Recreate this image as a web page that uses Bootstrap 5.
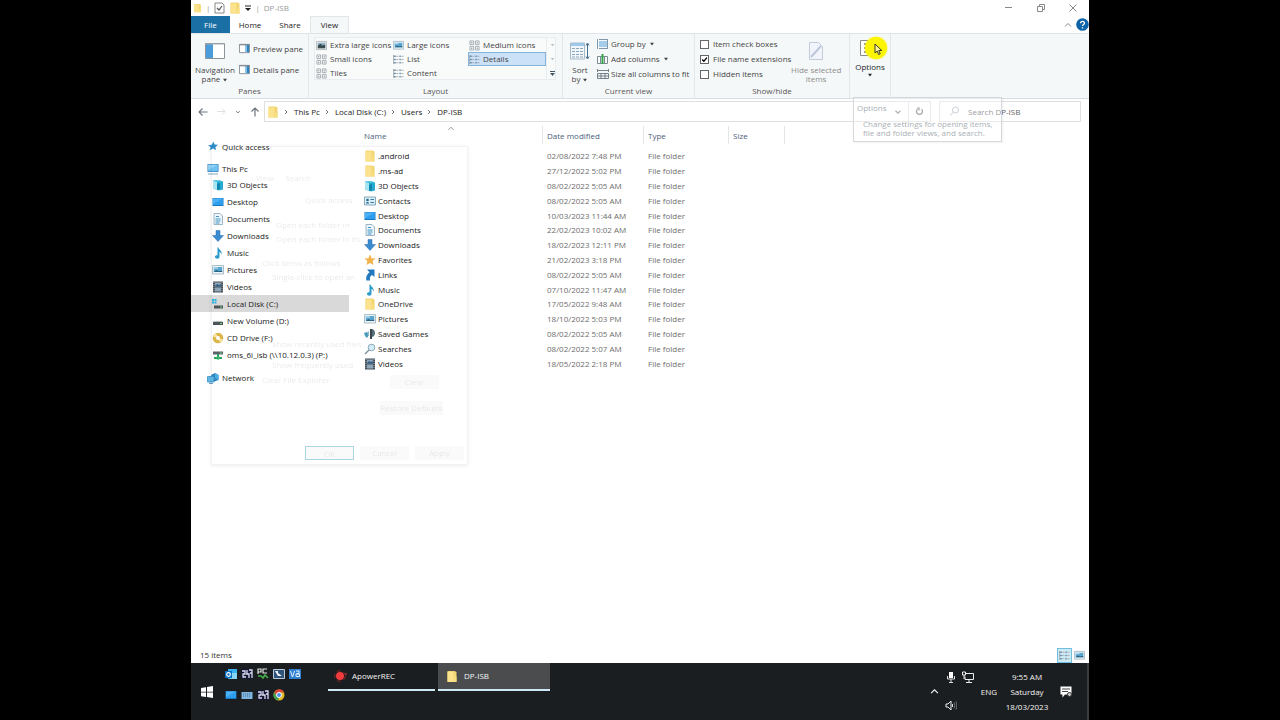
<!DOCTYPE html>
<html lang="en">
<head>
<meta charset="utf-8">
<meta name="viewport" content="width=device-width, initial-scale=1">
<title>DP-ISB</title>
<link rel="stylesheet" href="https://cdn.jsdelivr.net/npm/bootstrap@5.3.0/dist/css/bootstrap.min.css">
<script src="https://cdn.jsdelivr.net/npm/bootstrap@5.3.0/dist/js/bootstrap.bundle.min.js"></script>
<style>
  body { background:#000; color:#222; font:8px/10px "Open Sans","Noto Sans",sans-serif; padding:0 191px; }
  a { color:inherit; text-decoration:none; }
  button { border:0; background:none; padding:0; color:inherit; font:inherit; white-space:nowrap; }
  svg { display:block; flex:none; }
  .screen { min-height:100vh; }
  .win { background:#fff; }
  .titlebar { height:16px; padding-left:2px; color:#999; }
  .titlebar .cap { width:32px; height:14px; }
  .tabs { height:17px; }
  .tabs a { text-align:center; padding:0 8px; border:1px solid transparent; border-bottom:0; line-height:15px; }
  .tabs a.file { background:#1a6fa5; color:#fff; padding:0 12px; }
  .tabs a.on { background:#f5f8f9; border-color:#e3e6e8; padding:0 10px; }
  .ribbon { background:#f5f8f9; border-top:1px solid #e0e4e8; border-bottom:1px solid #d9dddf; height:66px; color:#444; }
  .grp { border-right:1px solid #e3e7e9; padding-top:1px; }
  .grp-body { height:51px; }
  .grp-name { text-align:center; color:#555; }
  .bigbtn { text-align:center; line-height:9px; padding-top:4px; }
  .bigbtn svg { margin:0 auto 5px; }
  .bigbtn.faded { color:#8c8c8c; }
  .gallery-pad { padding:2px 6px 0 5px; }
  .gallery { height:43px; border:1px solid #e6ecef; background:#f9fbfb; }
  .gallery .views { display:grid; grid-template-columns:77px 76px 78px; grid-template-rows:repeat(3,14px); }
  .gallery button { display:flex; align-items:center; gap:3px; border:1px solid transparent; }
  .gallery button.on { background:#cbe1f8; border-color:#86b3dc; }
  .gallery .scroller { width:11px; border-left:1px solid #e6ecef; }
  .gallery .scroller button { height:14px; justify-content:center; width:10px; }
  .form-check-input.tick { width:9px; height:9px; margin:0; border:1px solid #666; border-radius:0; background-color:#fff; flex:none; }
  .form-check-input.tick:checked { background-color:#fff; background-image:url("data:image/svg+xml,%3csvg xmlns='http://www.w3.org/2000/svg' viewBox='0 0 9 9'%3e%3cpath d='M1.5 4.5l2.2 2.2L7.6 2' fill='none' stroke='%23000' stroke-width='1.6'/%3e%3c/svg%3e"); background-size:contain; }
  .addr { padding:2px 8px 0 7px; height:25px; color:#222; }
  .addr .navi { width:66px; height:21px; padding-right:4px; }
  .boxed { border:1px solid #dfdfdf; height:21px; background:#fff; }
  .boxed .crumb { margin:0 5px 0 4px; color:#666; }
  .boxed input { border:0; outline:0; padding:0; font:inherit; color:#666; min-width:0; background:none; }
  .boxed input::placeholder { color:#666; opacity:1; }
  .search { width:142px; margin-left:8px; }
  .side { width:165px; padding-top:12px; }
  .side a { display:flex; align-items:center; gap:3px; height:17px; padding-left:16px; }
  .side ul { height:186px; }
  .side li { flex:1 1 0; min-height:0; }
  .side ul a { padding-left:21px; height:100%; width:158px; }
  .side a.on { background:#d9d9d9; }
  .files { table-layout:fixed; width:429px; border-collapse:separate; border-spacing:0; }
  .files th { font-weight:400; color:#4c607a; height:18px; border-right:1px solid #e5e5e5; padding:0 0 0 4px; }
  .files td { padding:0 0 0 4px; color:#6d6d6d; white-space:nowrap; line-height:10px; }
  .files tbody { height:227px; }
  .files th:first-child { padding-left:8px; }
  .files td:first-child a { display:flex; align-items:center; gap:2px; color:#222; padding-left:4px; }
  .files thead th { padding-top:2px; }
  .files .gap td { height:5px; line-height:5px; font-size:0; }
  .status { height:16px; padding:0 2px 0 9px; color:#333; }
  .status .v { width:15px; height:15px; display:flex; align-items:center; justify-content:center; }
  .status .v.on { background:#cdeaf5; border:1px solid #6fc0df; }
  .tip { position:absolute; top:97px; left:662px; width:149px; height:45px; border:1px solid #d6d9db; background:rgba(255,255,255,.35); color:#a9afb5; padding:5px 3px; line-height:9px; box-shadow:1px 1px 2px rgba(0,0,0,.06); }
  .tip p { margin:7px 0 0 6px; white-space:nowrap; }
  .spot { position:absolute; left:674px; top:37px; width:22px; height:22px; border-radius:50%; background:#fbf503; box-shadow:0 0 2px #fbf503; }
  .ghost { position:absolute; left:20px; top:146px; width:257px; height:319px; border:1px solid rgba(0,0,0,.05); box-shadow:0 1px 4px rgba(0,0,0,.07); color:rgba(0,0,0,.09); pointer-events:none; filter:blur(.5px); white-space:nowrap; }
  .ghost .fade-btn { background:rgba(0,0,0,.02); text-align:center; width:49px; height:14px; line-height:13px; }
  .ghost .ok { border:1px solid #a9d5e4; }
  .task { background:#1b1e20; color:#f4f4f4; height:57px; border-right:2px solid #3a3c3e; }
  .task .start { width:32px; }
  .task .quick { display:grid; grid-template-columns:repeat(5,12px); gap:9px 4px; width:104px; padding:5px 0 0 2px; align-content:start; }
  .task .app { height:28px; border-bottom:2px solid #cfe8f6; width:107px; display:flex; align-items:center; gap:5px; padding-left:6px; }
  .task .app.on { background:#4a4c4e; width:112px; margin-left:3px; gap:6px; padding-left:8px; }
  .tray { display:grid; grid-template-columns:17px 18px; grid-template-rows:28px 28px; align-items:center; justify-items:center; }
  .clock { width:52px; text-align:center; line-height:15px; padding-top:6px; }
</style>
</head>
<body>
<svg width="0" height="0" class="position-absolute" aria-hidden="true">
  <defs>
  <symbol id="folder" viewBox="0 0 12 12"><path d="M1.5 0.5h7l2 1v10h-9z" fill="#f3d472"/><path d="M1.5 1.5h6v10h-6z" fill="#fbe28c"/><path d="M8.500 6h2v5.500h-3z" fill="#f7de80"/></symbol>
  <symbol id="cube" viewBox="0 0 12 12"><path d="M1 1.500h7l3 1v8l-4 1-6-2z" fill="#28a9d0"/><path d="M1 1.500L5 3v8L1 9.500z" fill="#a6e6f2"/><path d="M1 1.500h7l3 1-6 .5z" fill="#49c4dd"/><path d="M5 5l3-1v6l-3 1z" fill="#0f87ae"/></symbol>
  <symbol id="desk" viewBox="0 0 12 12"><path d="M.5 2h11v8H.5z" fill="#1577c2"/><path d="M1 2.500h10v6.500H1z" fill="#2e9ded"/><path d="M1 2.500h10L1 8z" fill="#4bb1f5"/></symbol>
  <symbol id="pc" viewBox="0 0 12 12"><path d="M.5 1h11v8H.5z" fill="#3687bd"/><path d="M1.200 1.700h9.600v6.600H1.200z" fill="#6ec1f1"/><path d="M1.200 1.700h9.600L1.200 7z" fill="#93d4f7"/><path d="M1 11h10" stroke="#7ea6c4"/></symbol>
  <symbol id="doc" viewBox="0 0 12 12"><path d="M2 .5h6l2.500 2.500v8.500H2z" fill="#eef6fb" stroke="#84a3b8" stroke-width=".8"/><path d="M4 3.500h3M3.500 6h5M3.500 8h5M3.500 10h4" stroke="#3d92c6"/></symbol>
  <symbol id="down" viewBox="0 0 12 12"><path d="M4 .5h4v5h3.500L6 11.500.5 5.500H4z" fill="#3a8bd0" stroke="#2a6fae" stroke-width=".5"/></symbol>
  <symbol id="music" viewBox="0 0 12 12"><path d="M6.500.5c.3 2.500 4 3 3 7-.6-2-1.500-2.500-2-2.500v4.500c0 3-4 2.500-4.500.7C2.800 8.700 4.300 8 5.500 8.400V.5z" fill="#2b9acb"/></symbol>
  <symbol id="pic" viewBox="0 0 12 12"><path d="M.5 1.500h11v8.500H.5z" fill="#eef5f8" stroke="#8aa5b3" stroke-width=".7"/><path d="M1.800 3h8.400v5H1.800z" fill="#58a5d0"/><path d="M1.800 8c2-2 3-2 4-1.300S8.500 6 10.200 7v1z" fill="#2b6480"/><path d="M2 4h4" stroke="#d9eef8"/></symbol>
  <symbol id="video" viewBox="0 0 12 12"><path d="M1 .5h10v11H1z" fill="#454f59"/><path d="M3 1.500h6v4H3zM3 6.500h6v4H3z" fill="#8fa6b8"/><path d="M3 5l2-2 2 1 2-1v2.500H3z" fill="#345f86"/><path d="M2 1v10M10 1v10" stroke="#bcc4ca" stroke-dasharray="1 1" stroke-width=".8"/></symbol>
  <symbol id="star" viewBox="0 0 12 12"><path d="M6 .5l1.600 3.700 4 .3-3 2.600.9 4L6 9l-3.500 2.100.9-4-3-2.600 4-.3z"/></symbol>
  <symbol id="pin" viewBox="0 0 12 12"><path d="M6.500.5l1.200 3.200 3.700.3-2.800 2.500.7 3.500L6 8.200 2.200 10l1.200-3.300L.8 4.600l3.800-.5z" fill="#2f8fcb"/></symbol>
  <symbol id="disk" viewBox="0 0 12 12"><path d="M1 7l1-1h8l1 1z" fill="#b9bdbf"/><path d="M1 7h10v3H1z" fill="#4c5459"/><path d="M8 8.500h2" stroke="#6fe07a"/></symbol>
  <symbol id="windisk" viewBox="0 0 12 12"><path d="M0 1h2v2H0zM2.500 1h2v2h-2zM0 3.500h2v2H0zM2.500 3.500h2v2h-2z" fill="#24b2df"/><path d="M2 7.500h9v3H2z" fill="#4c5459"/><path d="M8 9h2" stroke="#6fe07a"/></symbol>
  <symbol id="cd" viewBox="0 0 12 12"><circle cx="6" cy="6" r="5.300" fill="#d9b54a"/><path d="M6 6L1 4.500a5 5 0 0 1 3-3.200zM6 6l5 1.500a5 5 0 0 1-3 3z" fill="#f6e7a5"/><circle cx="6" cy="6" r="1.900" fill="#fff"/></symbol>
  <symbol id="netdisk" viewBox="0 0 12 12"><path d="M1 2.500h10v3H1z" fill="#596267"/><path d="M8 4h2" stroke="#6fe07a"/><path d="M6 5v4M2 9h8" stroke="#28a35a" stroke-width="2"/><circle cx="6" cy="9" r="1.800" fill="#32b36a"/></symbol>
  <symbol id="net" viewBox="0 0 12 12"><path d="M4 3l4-2 3.500 2v5L6 10z" fill="#2b86c2"/><path d="M8 1l3.500 2v5L8 6z" fill="#4faee0"/><path d="M.5 4.500h6.500V10H.5z" fill="#62b9e8" stroke="#2b86c2" stroke-width=".7"/><path d="M2 11.300h4" stroke="#4a8ab0"/></symbol>
  <symbol id="contact" viewBox="0 0 12 12"><path d="M.5 2h11v8H.5z" fill="#dceef7" stroke="#6d95ad" stroke-width=".8"/><path d="M2 8.500c0-2 3-2 3 0z" fill="#276a92"/><circle cx="3.500" cy="5" r="1.300" fill="#276a92"/><path d="M6.500 4.500h3.500M6.500 7.500h3.500" stroke="#377ea8"/></symbol>
  <symbol id="link" viewBox="0 0 12 12"><path d="M3 .5h7.500V8L8 6c-2 1-2.500 3-2 5.500H2.500C1.500 8.500 3 5 5.500 3.200z" fill="#2279c0"/></symbol>
  <symbol id="games" viewBox="0 0 12 12"><path d="M6 1h2v10H6z" fill="#37474f"/><path d="M8 1c4 1 4 7 0 8z" fill="#566c78"/><path d="M0 5l3-1 2 3-2 3-2-2z" fill="#4d99bb"/><path d="M3 4l2-1v5z" fill="#98bfd0"/></symbol>
  <symbol id="mag" viewBox="0 0 12 12"><circle cx="7.500" cy="4.500" r="3.300" fill="#d5edf8" stroke="#86a8b9"/><path d="M5 7L1 11" stroke="#7d95a1" stroke-width="1.500"/></symbol>
  <symbol id="pane" viewBox="0 0 12 12"><path d="M.5 1.500h11v9H.5z" fill="#fff" stroke="#777f86" stroke-width=".9"/><path d="M6.500 2h2v8h-2z" fill="#8ac5ea"/><path d="M8.500 2H11v8H8.500z" fill="#2f83bf"/><path d="M.5 2h11" stroke="#777f86"/></symbol>
  <symbol id="grid" viewBox="0 0 12 12"><path d="M1 1h4v4H1zM7 1h4v4H7zM1 7h4v4H1zM7 7h4v4H7z" fill="#f6f7f7" stroke="#9aa3a8" stroke-width=".9"/><path d="M2.500 3h1M8.500 3h1M2.500 9h1M8.500 9h1" stroke="#56666e"/></symbol>
  <symbol id="lst" viewBox="0 0 12 12"><path d="M1 2.500h2M1 6h2M1 9.500h2M7 2.500h1.500M7 6h1.500M7 9.500h1.500" stroke="#6c8ca5" stroke-width="1.500"/><path d="M3.500 2.500H6M3.500 6H6M3.500 9.500H6M9 2.500h2.500M9 6h2.500M9 9.500h2.500M.5 1v10" stroke="#a3adb3"/></symbol>
  <symbol id="thumb" viewBox="0 0 12 12"><path d="M.5 1.500h11v9H.5z" fill="#e8eaeb" stroke="#99a2a7" stroke-width=".7"/><path d="M2 3h8v6H2z" fill="#8fb0c2"/><path d="M2 9V6l3-2 2 2 3-1v4z" fill="#3b4c51"/></symbol>
  <symbol id="drop" viewBox="0 0 6 4"><path d="M1 .8h4L3 3.400z" fill="currentColor"/></symbol>
  <symbol id="chev" viewBox="0 0 8 8"><path d="M1.500 2.800L4 5.200l2.500-2.400" fill="none" stroke="currentColor" stroke-width="1.200"/></symbol>
  <symbol id="up" viewBox="0 0 8 8"><path d="M1 5.500L4 2.500l3 3" fill="none" stroke="currentColor"/></symbol>
  <symbol id="sep" viewBox="0 0 6 6"><path d="M2 1l2 2-2 2" fill="none" stroke="currentColor" stroke-width=".9"/></symbol>
  <symbol id="arrow" viewBox="0 0 10 10"><path d="M9.500 5H1M4.500 1.500L1 5l3.500 3.500" fill="none" stroke="currentColor" stroke-width="1.100"/></symbol>
  <symbol id="sage" viewBox="0 0 12 12"><path d="M0 1h12v10H0z" fill="#14172f"/><path d="M1 3h3v3H2v3h3M6 2v4M5 6h3v4M8 2h3v8M9 5h2" fill="none" stroke="#dadcf5" stroke-width="1.300"/></symbol>
  </defs>
</svg>

<div class="screen d-flex flex-column position-relative">
<main class="win flex-grow-1 d-flex flex-column">
  <header class="titlebar d-flex align-items-center">
    <svg width="9" height="12"><use href="#folder"/></svg>
    <span class="ps-1">|</span>
    <svg style="margin-left:4px" width="11" height="12" viewBox="0 0 11 12"><path d="M1 1h7l2 2v8H1z" fill="#fff" stroke="#888"/><path d="M3 6l2 2 3-4" fill="none" stroke="#555" stroke-width="1.200"/></svg>
    <svg class="ms-1" width="12" height="12"><use href="#folder"/></svg>
    <svg class="ms-1" width="6" height="7" viewBox="0 0 6 7"><path d="M0 1h6" stroke="#222"/><path d="M0 3h6L3 6z" fill="#222"/></svg>
    <span class="px-1">|</span><span>DP-ISB</span>
    <div class="ms-auto d-flex">
      <button class="cap" aria-label="Minimize"><svg class="mx-auto" width="10" height="10"><path d="M1 4.500h7" stroke="#888"/></svg></button>
      <button class="cap" aria-label="Restore"><svg class="mx-auto" width="10" height="10"><path d="M1.500 3.500h5v5h-5zM3.500 3V1.500h5v5H7" fill="none" stroke="#888"/></svg></button>
      <button class="cap" aria-label="Close"><svg class="mx-auto" width="10" height="10"><path d="M1.500 1.500l7 7M8.500 1.500l-7 7" stroke="#888"/></svg></button>
    </div>
  </header>
  <nav class="tabs d-flex">
    <a class="file" href="#">File</a><a href="#">Home</a><a href="#">Share</a><a class="on" href="#">View</a>
    <div class="ms-auto d-flex align-items-center gap-1">
      <button aria-label="Collapse"><svg width="8" height="8" color="#888"><use href="#up"/></svg></button>
      <a class="p-0 border-0" href="#" aria-label="Help"><svg width="13" height="13" viewBox="0 0 12 12"><circle cx="6" cy="6" r="5.800" fill="#0d64a8"/><path d="M4.300 4.800c0-2.300 3.500-2.300 3.500 0C7.800 6 6 6 6 7.300M6 8.500v1.200" fill="none" stroke="#fff" stroke-width="1.200"/></svg></a>
    </div>
  </nav>

  <section class="ribbon d-flex">
    <div class="grp" style="width:118px">
      <div class="grp-body d-flex">
        <button class="bigbtn d-block" style="width:48px"><svg width="20" height="18"><path d="M.5 1.500h19v15H.5z" fill="#fff" stroke="#8b949b"/><path d="M1 2h7v14H1z" fill="#4b9cdb"/><path d="M1 2h18" stroke="#a7aeb3"/></svg>Navigation<br>pane <svg class="d-inline m-0" width="6" height="4"><use href="#drop"/></svg></button>
        <div class="d-flex flex-column" style="padding-top:8px;gap:10px">
          <button class="d-flex align-items-center" style="gap:3px"><svg width="11" height="11"><use href="#pane"/></svg>Preview pane</button>
          <button class="d-flex align-items-center" style="gap:3px"><svg width="11" height="11"><use href="#pane"/></svg>Details pane</button>
        </div>
      </div>
      <div class="grp-name">Panes</div>
    </div>
    <div class="grp" style="width:254px">
      <div class="grp-body gallery-pad">
        <div class="gallery d-flex">
          <div class="views">
            <button><svg width="11" height="11"><use href="#thumb"/></svg>Extra large icons</button><button><svg width="11" height="11"><use href="#pic"/></svg>Large icons</button><button><svg width="11" height="11"><use href="#grid"/></svg>Medium icons</button>
            <button><svg width="11" height="11"><use href="#grid"/></svg>Small icons</button><button><svg width="11" height="11"><use href="#lst"/></svg>List</button><button class="on"><svg width="11" height="11"><use href="#lst"/></svg>Details</button>
            <button><svg width="11" height="11"><use href="#grid"/></svg>Tiles</button><button><svg width="11" height="11"><use href="#lst"/></svg>Content</button>
          </div>
          <div class="scroller">
            <button aria-label="Scroll up"><svg width="5" height="4" color="#bbb"><use href="#drop"/></svg></button>
            <button aria-label="Scroll down"><svg width="5" height="4" color="#bbb"><use href="#drop"/></svg></button>
            <button aria-label="More views"><svg width="7" height="7"><path d="M1 1.500h5" stroke="#456"/><path d="M1 3h5L3.500 6z" fill="#456"/></svg></button>
          </div>
        </div>
      </div>
      <div class="grp-name">Layout</div>
    </div>
    <div class="grp" style="width:132px">
      <div class="grp-body d-flex">
        <button class="bigbtn d-block" style="width:34px"><svg width="20" height="18"><path d="M.5 1h14v16H.5z" fill="#f1f6fa" stroke="#a9b9c5"/><path d="M1 2.500h13" stroke="#9cc9ea" stroke-width="3"/><path d="M2 6.500h12M2 9.500h12M2 12.500h12M2 15h12" stroke="#8fa9bb" stroke-dasharray="3 1"/><path d="M17.500 2v14M16 3.500L17.500 1 19 3.500M16 14.500l1.500 2.500 1.500-2.500" stroke="#446f91" fill="none"/></svg>Sort<br>by <svg class="d-inline m-0" width="6" height="4"><use href="#drop"/></svg></button>
        <div class="d-flex flex-column" style="padding-top:4px;gap:5px">
          <button class="d-flex align-items-center" style="gap:3px"><svg width="11" height="10"><path d="M2 2h8v6H2z" fill="#a4cdec"/><path d="M.5 0v10M10.500 0v10M2 .5h8M2 9.500h8" stroke="#7f98aa"/></svg>Group by <svg width="6" height="4"><use href="#drop"/></svg></button>
          <button class="d-flex align-items-center" style="gap:3px"><svg width="11" height="10"><path d="M.5 2.500h10v7H.5zM3.500 2v8M7.500 2v8" fill="#fff" stroke="#7b8a93"/><path d="M5.500 0v10" stroke="#35a34a" stroke-width="2"/></svg>Add columns <svg width="6" height="4"><use href="#drop"/></svg></button>
          <button class="d-flex align-items-center" style="gap:2px"><svg width="12" height="10"><path d="M.5 4.500h11v5H.5zM0 7h12M4 4v6M8 4v6M1 1.500h10M.5 0v3M11.500 0v3" fill="none" stroke="#69757d" stroke-width=".9"/></svg>Size all columns to fit</button>
        </div>
      </div>
      <div class="grp-name">Current view</div>
    </div>
    <div class="grp" style="width:155px">
      <div class="grp-body d-flex">
        <div class="d-flex flex-column" style="padding:4px 0 0 5px;gap:5px;width:96px">
          <label class="d-flex align-items-center gap-1"><input class="form-check-input tick" type="checkbox">Item check boxes</label>
          <label class="d-flex align-items-center gap-1 text-nowrap"><input class="form-check-input tick" type="checkbox" checked>File name extensions</label>
          <label class="d-flex align-items-center gap-1"><input class="form-check-input tick" type="checkbox">Hidden items</label>
        </div>
        <button class="bigbtn faded d-block"><svg width="16" height="18"><path d="M1.500.5h9l4 4v13h-13z" fill="#f1f4fa" stroke="#c3cbd8"/><path d="M3 15L13 4" stroke="#bcc7dc" stroke-width="2"/></svg>Hide selected<br>items</button>
      </div>
      <div class="grp-name">Show/hide</div>
    </div>
    <div class="grp" style="width:41px">
      <button class="bigbtn d-block w-100 text-dark"><svg width="20" height="18"><path d="M.5 1.500h14v15H.5z" fill="#fff" stroke="#888"/><path d="M4 5h5M4 9h5M4 13h5" stroke="#777" stroke-width="1.500" stroke-dasharray="2 1"/></svg>Options<svg style="margin-top:2px" width="6" height="4"><use href="#drop"/></svg></button>
    </div>
  </section>

  <section class="addr d-flex">
    <div class="navi d-flex align-items-center justify-content-between text-secondary">
      <button aria-label="Back"><svg width="10" height="10"><use href="#arrow"/></svg></button>
      <button aria-label="Forward"><svg width="9" height="9" color="#ddd" viewBox="0 0 10 10"><path d="M.5 5H9M5.500 1.500L9 5 5.500 8.500" fill="none" stroke="currentColor"/></svg></button>
      <button aria-label="Recent"><svg width="6" height="6"><use href="#chev"/></svg></button>
      <button aria-label="Up"><svg width="10" height="10" viewBox="0 0 10 10"><path d="M5 9.500V1M1.500 4.500L5 1l3.500 3.500" fill="none" stroke="currentColor" stroke-width="1.200"/></svg></button>
    </div>
    <div class="boxed d-flex align-items-center flex-fill" style="padding-left:2px">
      <svg width="12" height="12"><use href="#folder"/></svg>
      <svg class="crumb" width="6" height="6"><use href="#sep"/></svg><a href="#">This Pc</a>
      <svg class="crumb" width="6" height="6"><use href="#sep"/></svg><a href="#">Local Disk (C:)</a>
      <svg class="crumb" width="6" height="6"><use href="#sep"/></svg><a href="#">Users</a>
      <svg class="crumb" width="6" height="6"><use href="#sep"/></svg><a href="#">DP-ISB</a>
      <button class="ms-auto" aria-label="History" style="width:20px"><svg class="mx-auto" width="8" height="8" color="#888"><use href="#chev"/></svg></button>
      <button class="h-100 border-start" aria-label="Refresh" style="width:22px"><svg class="mx-auto" width="9" height="9" viewBox="0 0 9 9"><path d="M6.500 2.200a3 3 0 1 1-4 0M2 1h2v2.500" fill="none" stroke="#777" stroke-width="1.200"/></svg></button>
    </div>
    <div class="boxed search d-flex align-items-center"><svg class="mx-2" width="12" height="11" viewBox="0 0 12 11"><circle cx="7.500" cy="4" r="3" fill="none" stroke="#aab6bf"/><path d="M5.300 6.300L2 9.500" stroke="#aab6bf"/></svg><input class="flex-fill" type="search" placeholder="Search DP-ISB" aria-label="Search DP-ISB"></div>
  </section>

  <div class="d-flex flex-grow-1" style="padding-top:2px">
    <nav class="side">
      <a href="#" style="margin-bottom:5px"><svg width="12" height="11"><use href="#pin"/></svg>Quick access</a>
      <a href="#"><svg width="12" height="12"><use href="#pc"/></svg>This Pc</a>
      <ul class="list-unstyled d-flex flex-column mb-0">
        <li><a href="#"><svg width="12" height="12"><use href="#cube"/></svg>3D Objects</a></li>
        <li><a href="#"><svg width="12" height="12"><use href="#desk"/></svg>Desktop</a></li>
        <li><a href="#"><svg width="12" height="12"><use href="#doc"/></svg>Documents</a></li>
        <li><a href="#"><svg width="12" height="12"><use href="#down"/></svg>Downloads</a></li>
        <li><a href="#"><svg width="12" height="12"><use href="#music"/></svg>Music</a></li>
        <li><a href="#"><svg width="12" height="12"><use href="#pic"/></svg>Pictures</a></li>
        <li><a href="#"><svg width="12" height="12"><use href="#video"/></svg>Videos</a></li>
        <li><a href="#" class="on"><svg width="12" height="12"><use href="#windisk"/></svg>Local Disk (C:)</a></li>
        <li><a href="#"><svg width="12" height="12"><use href="#disk"/></svg>New Volume (D:)</a></li>
        <li><a href="#"><svg width="12" height="12"><use href="#cd"/></svg>CD Drive (F:)</a></li>
        <li><a href="#"><svg width="12" height="12"><use href="#netdisk"/></svg>oms_6i_isb (\\10.12.0.3) (P:)</a></li>
      </ul>
      <a href="#" style="margin-top:6px"><svg width="12" height="12"><use href="#net"/></svg>Network</a>
    </nav>
    <div>
      <table class="files">
        <colgroup><col style="width:187px"><col style="width:101px"><col style="width:85px"><col style="width:56px"></colgroup>
        <thead><tr><th class="position-relative">Name<svg class="position-absolute" style="left:91px;top:-1px" width="8" height="7" color="#888"><use href="#up"/></svg></th><th>Date modified</th><th>Type</th><th>Size</th></tr></thead>
        <tbody id="rows"></tbody>
      </table>
    </div>
  </div>

  <footer class="status d-flex align-items-center">
    <span>15 items</span>
    <button class="v on ms-auto" aria-label="Details view"><svg width="11" height="11"><use href="#lst"/></svg></button>
    <button class="v" aria-label="Thumbnail view"><svg width="11" height="11"><use href="#pic"/></svg></button>
  </footer>
</main>

<footer class="task d-flex">
  <button class="start" aria-label="Start"><svg class="mx-auto" width="12" height="12"><path d="M0 2l5-.8v4.500H0zM6 1l6-1v5.700H6zM0 6.500h5V11l-5-.8zM6 6.500h6V12l-6-1z" fill="#fff"/></svg></button>
  <div class="quick">
    <svg width="12" height="12"><path d="M3 1h9v10H3z" fill="#38b1ee"/><path d="M6 5h6v6H5z" fill="#85d5f7"/><path d="M0 3h7v7H0z" fill="#0a6fc0"/><circle cx="3.500" cy="6.500" r="1.800" fill="none" stroke="#fff" stroke-width="1.200"/></svg>
    <svg width="12" height="12"><use href="#sage"/></svg>
    <svg width="12" height="12"><path d="M1 6V1h3v3H1M10 1H6v4h4" fill="none" stroke="#e5e5e5" stroke-width="1.200"/><path d="M1 8h3l2 2 2-3 3 3" fill="none" stroke="#42b047" stroke-width="1.600"/></svg>
    <svg width="12" height="12"><path d="M.5 1.500h11v9H.5z" fill="#31547a" stroke="#b8cadc"/><path d="M2 3h3v2l4 3H5z" fill="#f0f5fa"/></svg>
    <svg width="12" height="12"><path d="M0 1h12v10H0z" fill="#2f7fd3"/><path d="M1.500 3l2 6 2-6M7 3h3v2.500H7.500M7 8.500h3.500V6H7z" fill="none" stroke="#e7f2ff"/></svg>
    <svg width="12" height="12"><use href="#desk"/></svg>
    <svg width="12" height="12"><path d="M.5 3h11v7H.5z" fill="#7fb5de"/><path d="M2 5h8M2 7h8" stroke="#416f96" stroke-dasharray="1 1"/></svg>
    <svg width="12" height="12"><use href="#sage"/></svg>
    <svg width="12" height="12"><circle cx="6" cy="6" r="5.500" fill="#e3b921"/><path d="M1.200 3.200A5.500 5.500 0 0 1 11 3.500H6L3.700 7z" fill="#dc4937"/><path d="M1.200 3.200L3.700 7.500 6 8.500 5 11.500A5.500 5.500 0 0 1 1.200 3.200z" fill="#3c9d54"/><circle cx="6" cy="6" r="2.500" fill="#4a8cf0" stroke="#fff"/></svg>
  </div>
  <button class="app" style="margin-left:1px"><svg width="13" height="12"><circle cx="6" cy="6" r="4" fill="#f03c3c"/><circle cx="6" cy="6" r="5.300" fill="none" stroke="#8e2626" stroke-dasharray="4 3"/><path d="M12 3v2" stroke="#c33"/></svg>ApowerREC</button>
  <button class="app on"><svg width="12" height="13"><use href="#folder"/></svg>DP-ISB</button>
  <div class="ms-auto d-flex">
    <button aria-label="Show hidden icons" style="width:16px"><svg class="mx-auto" width="9" height="9" viewBox="0 0 8 8"><use href="#up"/></svg></button>
    <div class="tray">
      <svg width="10" height="12"><path d="M3 1h4v6H3z" fill="#fff"/><path d="M1.500 5v3h7V5M5 8v3M3 11.500h4" fill="none" stroke="#ddd"/></svg>
      <svg width="12" height="12"><path d="M4 2.500h7.500v6H3v-3M7 9v2M4 11.500h6" fill="none" stroke="#eee"/><path d="M.5 1h3v3h-3zM2 4v4" fill="none" stroke="#eee"/></svg>
      <svg width="12" height="11"><path d="M1 4h2l3-3v9L3 7H1z" fill="none" stroke="#eee"/><path d="M7.500 4v3" stroke="#ddd"/><path d="M9 2.500c1 2 1 4 0 6M11 1.500c1 3 1 5 0 8" fill="none" stroke="#888" stroke-width=".8"/></svg>
    </div>
    <span class="align-self-center text-center" style="width:24px">ENG</span>
    <div class="clock">9:55 AM<br>Saturday<br>18/03/2023</div>
    <button aria-label="Notifications" style="width:34px;padding-right:8px"><svg class="mx-auto" width="12" height="12"><path d="M.5.5h11v8H5l-2.500 3v-3h-2z" fill="#fff"/><path d="M2 3h8M2 5.500h6" stroke="#444"/><circle cx="9.500" cy="8.500" r="2" fill="#ccc" stroke="#333"/></svg></button>
  </div>
</footer>

<div class="ghost" aria-hidden="true">
  <div class="d-flex" style="padding:26px 0 0 44px;gap:12px"><span>View</span><span>Search</span></div>
  <div style="padding:12px 0 0 93px">Quick access</div>
  <div style="padding:15px 0 0 64px">Open each folder in</div>
  <div style="padding:4px 0 0 64px">Open each folder in its</div>
  <div style="padding:14px 0 0 50px">Click items as follows</div>
  <div style="padding:4px 0 0 60px">Single-click to open an</div>
  <div style="padding:57px 0 0 60px">Show recently used files</div>
  <div style="padding:11px 0 0 60px">Show frequently used</div>
  <div class="d-flex justify-content-between" style="padding:5px 28px 0 50px"><span>Clear File Explorer</span><span class="fade-btn">Clear</span></div>
  <div style="padding:12px 24px 0 168px"><div class="fade-btn w-100">Restore Defaults</div></div>
  <div class="d-flex" style="padding:31px 0 0 93px;gap:6px"><span class="fade-btn ok">OK</span><span class="fade-btn">Cancel</span><span class="fade-btn">Apply</span></div>
</div>
<div class="tip" role="tooltip">Options<p>Change settings for opening items,<br>file and folder views, and search.</p></div>
<div class="spot"><svg style="margin:6px 0 0 9px" width="9" height="13"><path d="M1 1v9l2.200-2 1.400 3.500 1.600-.7L4.800 7.500h3z" fill="#fff4a0" stroke="#222" stroke-width=".9"/></svg></div>
</div>

<script>
  const files = [
    ["folder", ".android", "02/08/2022 7:48 PM"], ["folder", ".ms-ad", "27/12/2022 5:02 PM"],
    ["cube", "3D Objects", "08/02/2022 5:05 AM"], ["contact", "Contacts", "08/02/2022 5:05 AM"],
    ["desk", "Desktop", "10/03/2023 11:44 AM"], ["doc", "Documents", "22/02/2023 10:02 AM"],
    ["down", "Downloads", "18/02/2023 12:11 PM"], ["star", "Favorites", "21/02/2023 3:18 PM"],
    ["link", "Links", "08/02/2022 5:05 AM"], ["music", "Music", "07/10/2022 11:47 AM"],
    ["folder", "OneDrive", "17/05/2022 9:48 AM"], ["pic", "Pictures", "18/10/2022 5:03 PM"],
    ["games", "Saved Games", "08/02/2022 5:05 AM"], ["mag", "Searches", "08/02/2022 5:07 AM"],
    ["video", "Videos", "18/05/2022 2:18 PM"]
  ];
  document.getElementById("rows").innerHTML = '<tr class="gap"><td colspan="4"></td></tr>' + files.map(([icon, name, date]) =>
    `<tr><td><a href="#"><svg width="12" height="12" fill="#f2b34c"><use href="#${icon}"/></svg>${name}</a></td><td>${date}</td><td>File folder</td><td></td></tr>`).join("");
</script>
</body>
</html>
